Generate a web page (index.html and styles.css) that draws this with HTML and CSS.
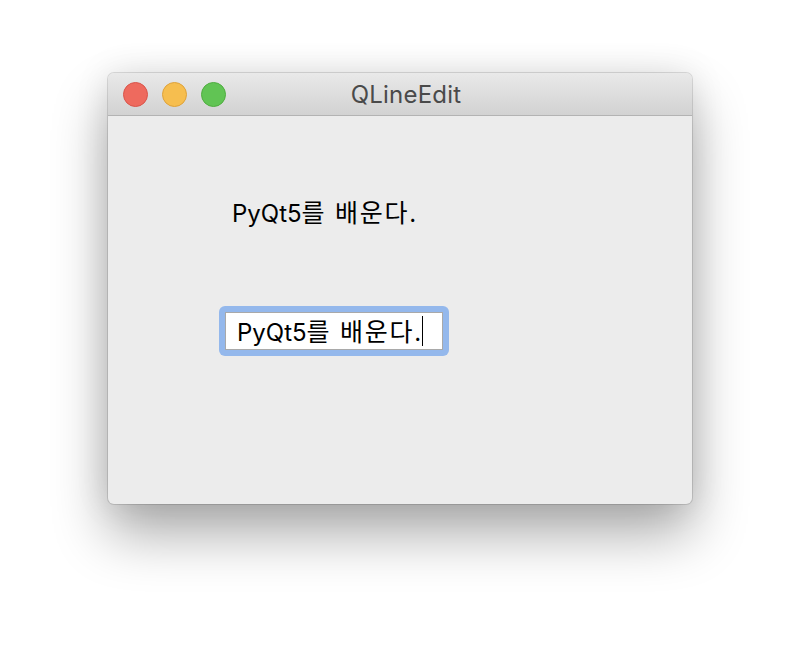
FILE: index.html
```html
<!DOCTYPE html>
<html lang="ko">
<head>
<meta charset="utf-8">
<title>QLineEdit</title>
<link rel="stylesheet" href="styles.css">
</head>
<body>
<div class="window">
  <div class="titlebar">
    <div class="lights">
      <span class="light red"></span>
      <span class="light yellow"></span>
      <span class="light green"></span>
    </div>
    <div class="title">QLineEdit</div>
  </div>
  <div class="content">
    <div class="label">PyQt5<span class="ko">를 배운다</span>.</div>
    <div class="field-ring">
      <div class="field"><span class="field-text">PyQt5<span class="ko">를 배운다</span>.</span><span class="caret"></span></div>
    </div>
  </div>
</div>
</body>
</html>
```

FILE: styles.css
```css
html, body {
  margin: 0;
  padding: 0;
  background: #ffffff;
  width: 800px;
  height: 648px;
  overflow: hidden;
}
body {
  padding: 73px 0 0 108px;
  box-sizing: border-box;
  font-family: "Inter", "Noto Sans CJK KR", sans-serif;
}
.window {
  width: 584px;
  height: 431px;
  border-radius: 6px;
  background: #ececec;
  box-shadow: 0 0 0 1px rgba(0,0,0,0.12), 0 30px 55px rgba(0,0,0,0.33), 0 0 35px rgba(0,0,0,0.10);
  overflow: hidden;
  display: flex;
  flex-direction: column;
}
.titlebar {
  height: 42px;
  flex: none;
  background: linear-gradient(#e9e9e9, #d2d2d2);
  border-bottom: 1px solid #b3b3b3;
  position: relative;
  display: flex;
  align-items: center;
}
.lights {
  display: flex;
  gap: 14px;
  padding-left: 15px;
  position: relative;
  z-index: 1;
}
.light {
  width: 25px;
  height: 25px;
  border-radius: 50%;
  box-sizing: border-box;
}
.red { background: #ee6a5e; border: 1px solid #d9544a; }
.yellow { background: #f6be4f; border: 1px solid #dea23a; }
.green { background: #61c454; border: 1px solid #4ead3f; }
.title {
  position: absolute;
  left: 12px;
  right: 0;
  top: 8px;
  text-align: center;
  font-family: "Inter", sans-serif;
  font-size: 24px;
  line-height: 28px;
  color: #4a4a4a;
  letter-spacing: 0.2px;
}
.content {
  flex: 1;
  padding: 0 0 0 111px;
}
.ko {
  font-family: "Noto Sans CJK KR", sans-serif;
  font-size: 25px;
  letter-spacing: 1.7px;
}
.label {
  margin-top: 80px;
  margin-left: 13px;
  font-size: 24px;
  line-height: 30px;
  color: #000;
  display: flex;
  align-items: baseline;
  white-space: pre;
}
.field-ring {
  margin-top: 77px;
  width: 230px;
  height: 50px;
  box-sizing: border-box;
  border-radius: 6px;
  background: #94b8ec;
  padding: 6px;
}
.field {
  height: 38px;
  box-sizing: border-box;
  background: #fff;
  border: 1px solid #a9a9a9;
  display: flex;
  align-items: center;
  padding-left: 11px;
  font-size: 24px;
  color: #000;
  white-space: pre;
}
.field-text {
  line-height: 30px;
}
.caret {
  display: inline-block;
  width: 1px;
  height: 30px;
  background: #000;
  margin-left: 1px;
}
```
